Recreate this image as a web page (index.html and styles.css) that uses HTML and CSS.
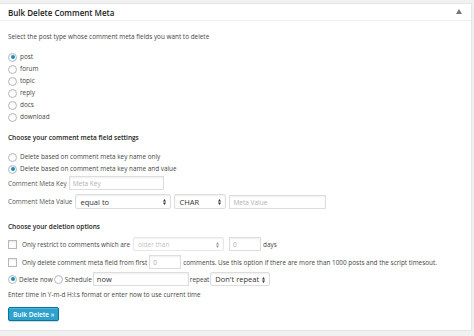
FILE: index.html
```html
<!DOCTYPE html>
<html>
  <head>
    <title>Bulk Delete Comment Meta</title>
    <link rel="stylesheet" href="styles.css">
  </head>
  <body>
    <div class="postbox">
      <div class="hndle">
        <span>Bulk Delete Comment Meta</span>
        <svg class="toggle" width="6" height="5" viewBox="0 0 6 5"><path d="M0 5 L3 0 L6 5 Z" fill="#777"/></svg>
      </div>
      <div class="inside">
        <p class="intro">Select the post type whose comment meta fields you want to delete</p>

        <ul class="types">
          <li><label><input type="radio" name="post_type" checked> post</label></li>
          <li><label><input type="radio" name="post_type"> forum</label></li>
          <li><label><input type="radio" name="post_type"> topic</label></li>
          <li><label><input type="radio" name="post_type"> reply</label></li>
          <li><label><input type="radio" name="post_type"> docs</label></li>
          <li><label><input type="radio" name="post_type"> download</label></li>
        </ul>

        <h4 class="section">Choose your comment meta field settings</h4>

        <ul class="modes">
          <li><label><input type="radio" name="use_value"> Delete based on comment meta key name only</label></li>
          <li><label><input type="radio" name="use_value" checked> Delete based on comment meta key name and value</label></li>
        </ul>

        <div class="row key-row">
          <span class="lbl">Comment Meta Key</span>
          <input type="text" class="txt key" placeholder="Meta Key">
        </div>
        <div class="row value-row">
          <span class="lbl">Comment Meta Value</span>
          <span class="sel op"><select><option>equal to</option></select><svg class="arr" width="3" height="6" viewBox="0 0 3 6"><path d="M0 2.4 L1.5 0 L3 2.4 Z M0 3.6 L1.5 6 L3 3.6 Z" fill="#333"/></svg></span>
          <span class="sel type"><select><option>CHAR</option></select><svg class="arr" width="3" height="6" viewBox="0 0 3 6"><path d="M0 2.4 L1.5 0 L3 2.4 Z M0 3.6 L1.5 6 L3 3.6 Z" fill="#333"/></svg></span>
          <input type="text" class="txt val" placeholder="Meta Value">
        </div>

        <h4 class="section deletion">Choose your deletion options</h4>

        <div class="row opt opt1">
          <input type="checkbox" class="chk">
          <span>Only restrict to comments which are</span>
          <span class="sel older disabled"><select disabled><option>older than</option></select><svg class="arr" width="3" height="6" viewBox="0 0 3 6"><path d="M0 2.4 L1.5 0 L3 2.4 Z M0 3.6 L1.5 6 L3 3.6 Z" fill="#999"/></svg></span>
          <input type="text" class="txt days dim" value="0">
          <span>days</span>
        </div>
        <div class="row opt">
          <input type="checkbox" class="chk">
          <span>Only delete comment meta field from first</span>
          <input type="text" class="txt first dim" value="0">
          <span>comments. Use this option if there are more than 1000 posts and the script timesout.</span>
        </div>
        <div class="row opt opt3">
          <label><input type="radio" name="cron" checked> Delete now</label>
          <label><input type="radio" name="cron"> Schedule</label>
          <input type="text" class="txt when" value="now">
          <span>repeat</span>
          <span class="sel repeat"><select><option>Don't repeat</option></select><svg class="arr" width="3" height="6" viewBox="0 0 3 6"><path d="M0 2.4 L1.5 0 L3 2.4 Z M0 3.6 L1.5 6 L3 3.6 Z" fill="#333"/></svg></span>
        </div>

        <p class="note">Enter time in Y-m-d H:i:s format or enter now to use current time</p>

        <button class="button-primary">Bulk Delete &raquo;</button>
      </div>
    </div>
  </body>
</html>
```

FILE: styles.css
```css
body {
  margin: 0;
  padding: 0;
  background-color: #f1f1f1;
  font-family: "Open Sans", sans-serif;
  font-size: 6.4px;
  color: #444;
}
.postbox {
  margin: 3px 0 0 -1px;
  width: 473px;
  height: 328px;
  box-sizing: border-box;
  background: #fff;
  border: 1px solid #e5e5e5;
  box-shadow: 0 1px 1px rgba(0, 0, 0, 0.04);
}
.hndle {
  display: flex;
  align-items: center;
  justify-content: space-between;
  height: 16px;
  padding: 0 9px 0 8px;
  border-bottom: 1px solid #eee;
  font-size: 8px;
  font-weight: 600;
  color: #222;
}
.toggle {
  margin-top: -1px;
}
.inside {
  padding: 0 8px;
}
p {
  margin: 0;
  line-height: 12px;
}
.intro {
  margin-top: 10px;
}
ul {
  list-style: none;
  margin: 0;
  padding: 0;
}
li {
  height: 12px;
  line-height: 12px;
}
label {
  display: inline-flex;
  align-items: center;
}
.types {
  margin-top: 8px;
}
.section {
  margin: 9px 0 0;
  line-height: 12px;
  font-size: 6.5px;
  font-weight: 600;
  color: #222;
}
.modes {
  margin-top: 7px;
}
input[type="radio"] {
  -webkit-appearance: none;
  appearance: none;
  width: 9px;
  height: 9px;
  margin: 0 3px 0 0;
  border: 1px solid #b4b9be;
  border-radius: 50%;
  background: #fff;
  box-shadow: inset 0 1px 2px rgba(0, 0, 0, 0.07);
  box-sizing: border-box;
  position: relative;
}
input[type="radio"]:checked::before {
  content: "";
  position: absolute;
  left: 1.5px;
  top: 1.5px;
  width: 4px;
  height: 4px;
  border-radius: 50%;
  background: #1e8cbe;
}
.chk {
  -webkit-appearance: none;
  appearance: none;
  width: 9px;
  height: 9px;
  margin: 0 3px 0 0;
  border: 1px solid #b4b9be;
  background: #fff;
  box-shadow: inset 0 1px 2px rgba(0, 0, 0, 0.1);
  box-sizing: border-box;
}
.row {
  display: flex;
  align-items: center;
  gap: 2px;
  height: 14px;
}
.lbl {
  color: #555;
}
.key-row {
  margin-top: 1px;
}
.value-row {
  margin-top: 4px;
  height: 15px;
}
.txt {
  box-sizing: border-box;
  height: 14px;
  margin: 0;
  padding: 0 3px;
  border: 1px solid #ddd;
  box-shadow: inset 0 1px 2px rgba(0, 0, 0, 0.07);
  font-family: "Open Sans", sans-serif;
  font-size: 7.5px;
  color: #333;
  background: #fff;
  outline: none;
}
.txt::placeholder {
  color: #b0b0b0;
  font-size: 6.5px;
}
.dim {
  color: #aaa;
  font-size: 6.5px;
}
.key { width: 95px; }
.val { width: 97px; margin-left: 1px; }
.days { width: 32px; margin-left: 3px; }
.first { width: 32px; }
.when { width: 96px; }
.sel {
  position: relative;
  display: inline-block;
}
.sel select {
  -webkit-appearance: none;
  appearance: none;
  box-sizing: border-box;
  width: 100%;
  height: 15px;
  margin: 0;
  padding: 0 8px 0 4px;
  border: 1px solid #ddd;
  border-radius: 2px;
  box-shadow: inset 0 1px 2px rgba(0, 0, 0, 0.07);
  background: #fff;
  font-family: "Open Sans", sans-serif;
  font-size: 7.5px;
  color: #333;
}
.sel .arr {
  position: absolute;
  right: 5px;
  top: 4.5px;
}
.sel.disabled select {
  color: #aaa;
  font-size: 6.5px;
  background: #fff;
}
.op { width: 96px; margin-left: 1px; }
.type { width: 52px; margin-left: 1px; }
.older { width: 91px; margin-left: 1px; }
.older select { height: 14px; }
.repeat { width: 60px; }
.repeat select { height: 14px; }
.deletion {
  margin-top: 12px;
}
.opt1 {
  margin-top: 11px;
}
.opt {
  margin-top: 4px;
}
.opt3 {
  margin-top: 3px;
  gap: 1px;
}
.opt3 input[type="radio"] {
  margin-right: 2px;
}
.note {
  margin-top: 3px;
}
.button-primary {
  display: block;
  margin-top: 6px;
  height: 14px;
  padding: 0 4px;
  background: #2ea2cc;
  border: 1px solid #0074a2;
  border-radius: 2px;
  box-shadow: inset 0 1px 0 rgba(120, 200, 230, 0.5), 0 1px 0 rgba(0, 0, 0, 0.15);
  color: #fff;
  font-family: "Open Sans", sans-serif;
  font-size: 6.5px;
  font-weight: 600;
  cursor: pointer;
}
```
